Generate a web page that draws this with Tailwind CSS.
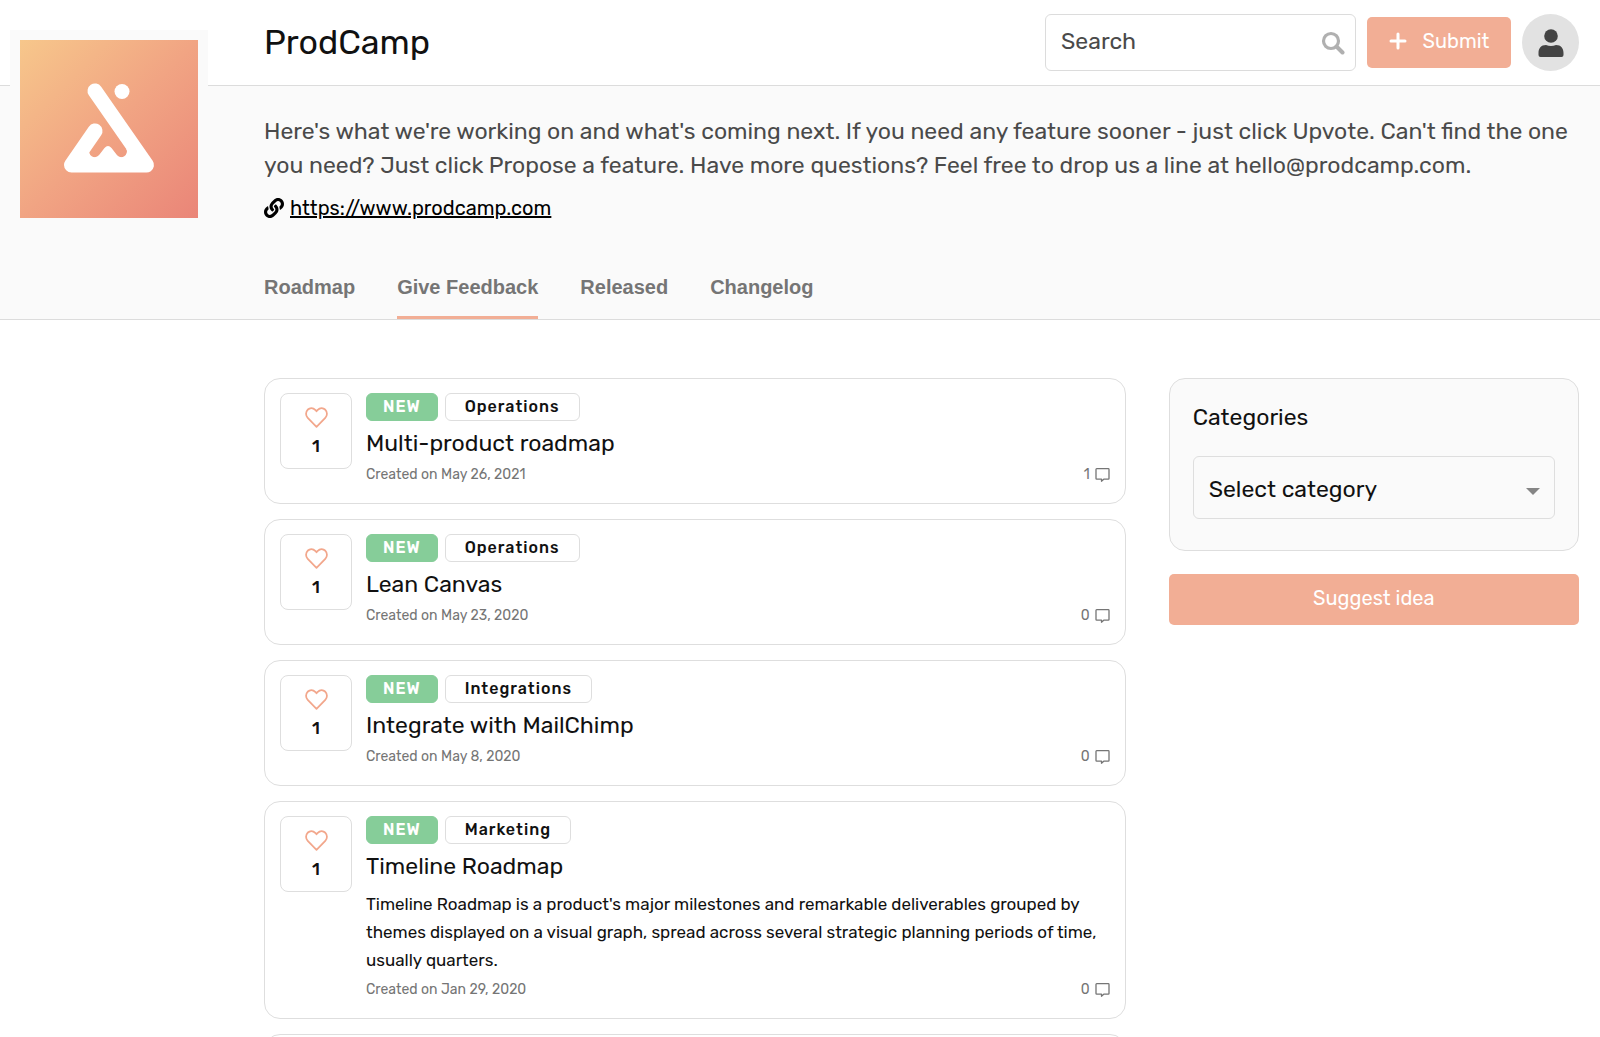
<!doctype html>
<html lang="en">
<head>
    <meta charset="UTF-8">
    <meta name="viewport" content="width=device-width, initial-scale=1.0">
    <title>ProdCamp</title>
    <script src="https://cdn.jsdelivr.net/npm/@tailwindcss/browser@4"></script>
</head>

<body class="bg-white text-[#111111] font-[Rubik,Roboto,sans-serif]">

    <!-- shared icons -->
    <svg class="hidden">
        <symbol id="heart" viewBox="0 0 22 20">
            <path d="M11 18.900 2.600 10.300C.5 8.100.5 4.600 2.500 2.600c2.100-2 5.300-1.900 7.300.1L11 4l1.200-1.300c2-2 5.200-2.100 7.300-.1 2 2 2 5.500-.1 7.700Z" fill="none" stroke="currentColor" stroke-width="1.700" stroke-linejoin="round"/>
        </symbol>
        <symbol id="comment" viewBox="0 0 15 15">
            <path d="M1.700.7h11.600a.7.7 0 0 1 .7.7v9a.7.7 0 0 1-.7.7H9L6.500 13.200V11.100H1.700a.7.7 0 0 1-.7-.7v-9A.7.7 0 0 1 1.700.7Z" fill="none" stroke="currentColor" stroke-width="1.300" stroke-linejoin="round"/>
        </symbol>
    </svg>

    <!-- Header -->
    <header class="relative flex items-center justify-between h-[86px] pl-[264px] pr-[21px] border-b border-[#dcdcdc]">
        <a href="#" aria-label="ProdCamp home" class="absolute left-[10px] top-[30px] p-[10px] bg-[#fafafa]">
            <svg class="size-[178px]" viewBox="0 0 178 178">
                <defs>
                    <linearGradient id="sunset" x1="0" y1="0" x2="1" y2="1">
                        <stop offset="0" stop-color="#f7c78b"/>
                        <stop offset="0.5" stop-color="#f1a483"/>
                        <stop offset="1" stop-color="#ea8578"/>
                    </linearGradient>
                </defs>
                <rect width="178" height="178" fill="url(#sunset)"/>
                <circle cx="102" cy="51.500" r="7.500" fill="#fff"/>
                <path d="M75 51 126.500 125H51.500L75 91" fill="none" stroke="#fff" stroke-width="15" stroke-linecap="round" stroke-linejoin="round"/>
                <path d="M52 125 70 108.500A5.500 5.500 0 0 0 79.500 114.500L84.500 108Q88 104 91.500 108L96.500 114.500A5.500 5.500 0 0 0 106 108.500L126 125Z" fill="#fff"/>
            </svg>
        </a>
        <h1 class="text-[34px] leading-10">ProdCamp</h1>
        <div class="flex items-center gap-[11px]">
            <div class="relative">
                <input type="text" aria-label="Search" placeholder="Search" class="block w-[311px] h-[57px] pl-[15px] pr-12 pb-[3px] text-[23px] border border-[#dcdcdc] rounded-md placeholder:text-[#4a4a4a] focus:outline-none">
                <svg class="absolute right-[11px] top-[17px] size-[24px] text-[#b0b0b0]" viewBox="0 0 24 24" fill="none" stroke="currentColor">
                    <circle cx="10" cy="10" r="7.500" stroke-width="3.200"/>
                    <path d="m15.500 15.500 6 6" stroke-width="4" stroke-linecap="round"/>
                </svg>
            </div>
            <button class="flex items-center justify-center gap-4 w-[144px] h-[51px] pb-[3px] bg-[#f2ae95] text-white text-[20px] rounded-[5px]">
                <svg class="size-[18px]" viewBox="0 0 18 18" fill="none" stroke="currentColor" stroke-width="3" stroke-linecap="round"><path d="M9 2v14M2 9h14"/></svg>
                Submit
            </button>
            <button aria-label="Account" class="flex items-center justify-center size-[57px] bg-[#e2e2e2] rounded-full">
                <svg class="w-[26px] h-[28px]" viewBox="0 0 26 28" fill="#444444">
                    <circle cx="13" cy="7" r="6.800"/>
                    <path d="M8 16q5 2 10 0c5 0 7.500 3.500 7.500 8v2q0 2-2 2H2.500q-2 0-2-2v-2c0-4.500 2.500-8 7.500-8Z"/>
                </svg>
            </button>
        </div>
    </header>

    <!-- Intro and tabs -->
    <section class="pl-[264px] pr-[21px] pt-[28px] bg-[#fafafa] border-b border-[#dcdcdc]">
        <p class="text-[23px] leading-[34px] text-[#4a4a4a]">Here's what we're working on and what's coming next. If you need any feature sooner - just click Upvote. Can't find the one you need? Just click Propose a feature. Have more questions? Feel free to drop us a line at hello@prodcamp.com.</p>
        <div class="flex items-center gap-[6px] mt-[10px] text-[20px] leading-[32px] text-black">
            <svg class="size-[20px]" viewBox="0 0 512 512" fill="currentColor">
                <path d="M326.612 185.391c59.747 59.809 58.927 155.698.36 214.59-.11.12-.24.25-.36.37l-67.2 67.2c-59.27 59.27-155.699 59.262-214.96 0-59.27-59.26-59.27-155.7 0-214.96l37.106-37.106c9.84-9.84 26.786-3.3 27.294 10.606.648 17.722 3.826 35.527 9.69 52.721 1.986 5.822.567 12.262-3.783 16.612l-13.087 13.087c-28.026 28.026-28.905 73.66-1.155 101.96 28.024 28.579 74.086 28.749 102.325.51l67.2-67.19c28.191-28.191 28.073-73.757 0-101.83-3.701-3.694-7.429-6.564-10.341-8.569a16.037 16.037 0 0 1-6.947-12.606c-.396-10.567 3.348-21.456 11.698-29.806l21.054-21.055c5.521-5.521 14.182-6.199 20.584-1.731a152.482 152.482 0 0 1 20.522 17.197zM467.547 44.449c-59.261-59.262-155.69-59.27-214.96 0l-67.2 67.2c-.12.12-.25.25-.36.37-58.566 58.892-59.387 154.781.36 214.59a152.454 152.454 0 0 0 20.521 17.196c6.402 4.468 15.064 3.789 20.584-1.731l21.054-21.055c8.35-8.35 12.094-19.239 11.698-29.806a16.037 16.037 0 0 0-6.947-12.606c-2.912-2.005-6.64-4.875-10.341-8.569-28.073-28.073-28.191-73.639 0-101.83l67.2-67.19c28.239-28.239 74.3-28.069 102.325.51 27.75 28.3 26.872 73.934-1.155 101.96l-13.087 13.087c-4.35 4.35-5.769 10.79-3.783 16.612 5.864 17.194 9.042 34.999 9.69 52.721.509 13.906 17.454 20.446 27.294 10.606l37.106-37.106c59.271-59.259 59.271-155.699.001-214.959z"/>
            </svg>
            <a href="#" class="underline">https://www.prodcamp.com</a>
        </div>
        <nav class="flex gap-[42px] mt-[38px] font-['Liberation_Sans',sans-serif] text-[20px] font-bold leading-[30px] text-[#757575]">
            <a href="#" class="pt-[10px] pb-[14px] border-b-3 border-transparent">Roadmap</a>
            <a href="#" class="pt-[10px] pb-[14px] border-b-3 border-[#f2ae95]">Give Feedback</a>
            <a href="#" class="pt-[10px] pb-[14px] border-b-3 border-transparent">Released</a>
            <a href="#" class="pt-[10px] pb-[14px] border-b-3 border-transparent">Changelog</a>
        </nav>
    </section>

    <main class="grid grid-cols-[21fr_10fr] items-start gap-[43px] pl-[264px] pr-[21px] pt-[58px]">

        <!-- Ideas -->
        <ul class="flex flex-col gap-[15px]">
            <li class="flex items-start gap-[14px] px-[15px] pt-[14px] pb-[17px] border border-[#dedede] rounded-2xl">
                <button class="flex flex-col items-center shrink-0 w-[72px] h-[76px] pt-[13px] border border-[#dedede] rounded-lg text-[#f2a78c]">
                    <svg class="w-[23px] h-[21px]"><use href="#heart"/></svg>
                    <span class="mt-[6px] text-[17px] leading-6 font-medium text-[#111111]">1</span>
                </button>
                <div class="grow">
                    <div class="flex gap-[7px] text-[16px] leading-[26px] font-medium tracking-[1px]">
                        <span class="px-4 border border-[#86cd99] bg-[#86cd99] text-white font-semibold rounded-md">NEW</span>
                        <span class="px-[19px] border border-[#dedede] rounded-md">Operations</span>
                    </div>
                    <h2 class="mt-[6px] text-[23px] leading-8">Multi-product roadmap</h2>
                    <div class="flex justify-between mt-[5px] text-[14px] leading-[22px] text-[#757575]">
                        <span>Created on May 26, 2021</span>
                        <span class="flex items-center gap-[5px]">1 <svg class="size-[15px]"><use href="#comment"/></svg></span>
                    </div>
                </div>
            </li>
            <li class="flex items-start gap-[14px] px-[15px] pt-[14px] pb-[17px] border border-[#dedede] rounded-2xl">
                <button class="flex flex-col items-center shrink-0 w-[72px] h-[76px] pt-[13px] border border-[#dedede] rounded-lg text-[#f2a78c]">
                    <svg class="w-[23px] h-[21px]"><use href="#heart"/></svg>
                    <span class="mt-[6px] text-[17px] leading-6 font-medium text-[#111111]">1</span>
                </button>
                <div class="grow">
                    <div class="flex gap-[7px] text-[16px] leading-[26px] font-medium tracking-[1px]">
                        <span class="px-4 border border-[#86cd99] bg-[#86cd99] text-white font-semibold rounded-md">NEW</span>
                        <span class="px-[19px] border border-[#dedede] rounded-md">Operations</span>
                    </div>
                    <h2 class="mt-[6px] text-[23px] leading-8">Lean Canvas</h2>
                    <div class="flex justify-between mt-[5px] text-[14px] leading-[22px] text-[#757575]">
                        <span>Created on May 23, 2020</span>
                        <span class="flex items-center gap-[5px]">0 <svg class="size-[15px]"><use href="#comment"/></svg></span>
                    </div>
                </div>
            </li>
            <li class="flex items-start gap-[14px] px-[15px] pt-[14px] pb-[17px] border border-[#dedede] rounded-2xl">
                <button class="flex flex-col items-center shrink-0 w-[72px] h-[76px] pt-[13px] border border-[#dedede] rounded-lg text-[#f2a78c]">
                    <svg class="w-[23px] h-[21px]"><use href="#heart"/></svg>
                    <span class="mt-[6px] text-[17px] leading-6 font-medium text-[#111111]">1</span>
                </button>
                <div class="grow">
                    <div class="flex gap-[7px] text-[16px] leading-[26px] font-medium tracking-[1px]">
                        <span class="px-4 border border-[#86cd99] bg-[#86cd99] text-white font-semibold rounded-md">NEW</span>
                        <span class="px-[19px] border border-[#dedede] rounded-md">Integrations</span>
                    </div>
                    <h2 class="mt-[6px] text-[23px] leading-8">Integrate with MailChimp</h2>
                    <div class="flex justify-between mt-[5px] text-[14px] leading-[22px] text-[#757575]">
                        <span>Created on May 8, 2020</span>
                        <span class="flex items-center gap-[5px]">0 <svg class="size-[15px]"><use href="#comment"/></svg></span>
                    </div>
                </div>
            </li>
            <li class="flex items-start gap-[14px] px-[15px] pt-[14px] pb-[17px] border border-[#dedede] rounded-2xl">
                <button class="flex flex-col items-center shrink-0 w-[72px] h-[76px] pt-[13px] border border-[#dedede] rounded-lg text-[#f2a78c]">
                    <svg class="w-[23px] h-[21px]"><use href="#heart"/></svg>
                    <span class="mt-[6px] text-[17px] leading-6 font-medium text-[#111111]">1</span>
                </button>
                <div class="grow">
                    <div class="flex gap-[7px] text-[16px] leading-[26px] font-medium tracking-[1px]">
                        <span class="px-4 border border-[#86cd99] bg-[#86cd99] text-white font-semibold rounded-md">NEW</span>
                        <span class="px-[19px] border border-[#dedede] rounded-md">Marketing</span>
                    </div>
                    <h2 class="mt-[6px] text-[23px] leading-8">Timeline Roadmap</h2>
                    <p class="mt-2 text-[17px] leading-[28px]">Timeline Roadmap is a product's major milestones and remarkable deliverables grouped by themes displayed on a visual graph, spread across several strategic planning periods of time, usually quarters.</p>
                    <div class="flex justify-between mt-[5px] text-[14px] leading-[22px] text-[#757575]">
                        <span>Created on Jan 29, 2020</span>
                        <span class="flex items-center gap-[5px]">0 <svg class="size-[15px]"><use href="#comment"/></svg></span>
                    </div>
                </div>
            </li>
            <li class="h-32 border border-[#dedede] rounded-2xl"></li>
        </ul>

        <!-- Sidebar -->
        <aside class="flex flex-col gap-[23px]">
            <div class="px-[23px] pt-[22px] pb-[31px] bg-[#fafafa] border border-[#dedede] rounded-2xl">
                <label for="category" class="block text-[23px] leading-8">Categories</label>
                <div class="relative mt-[23px]">
                    <select id="category" class="block appearance-none w-full h-[63px] px-[15px] pt-[3px] text-[23px] border border-[#dedede] rounded-md bg-transparent">
                        <option>Select category</option>
                    </select>
                    <svg class="absolute right-[15px] top-[32px] w-[14px] h-[7px] pointer-events-none" viewBox="0 0 14 7" fill="#858585"><path d="M0 0h14L7 7z"/></svg>
                </div>
            </div>
            <button class="h-[51px] pb-[3px] bg-[#f2ae95] text-white text-[20px] rounded-[5px]">Suggest idea</button>
        </aside>
    </main>

</body>
</html>
